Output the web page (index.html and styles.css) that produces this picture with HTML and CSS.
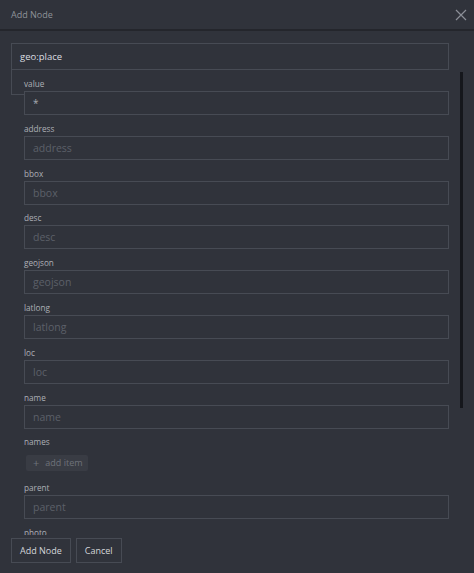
FILE: index.html
```html
<!DOCTYPE html>
<html>
<head>
<meta charset="utf-8">
<link rel="stylesheet" href="styles.css">
</head>
<body>
<div class="dialog">
  <div class="header">
    <span class="title">Add Node</span>
    <svg class="close" width="12" height="12" viewBox="0 0 12 12"><path d="M1 1L11 11M11 1L1 11" stroke="#8b8f97" stroke-width="1.2" fill="none"/></svg>
  </div>
  <div class="type-input">geo:place</div>
  <div class="body">
    <div class="corner"></div>
    <div class="fields">
      <div class="field"><div class="label">value</div><div class="input value">*</div></div>
      <div class="field"><div class="label">address</div><div class="input">address</div></div>
      <div class="field"><div class="label">bbox</div><div class="input">bbox</div></div>
      <div class="field"><div class="label">desc</div><div class="input">desc</div></div>
      <div class="field"><div class="label">geojson</div><div class="input">geojson</div></div>
      <div class="field"><div class="label">latlong</div><div class="input">latlong</div></div>
      <div class="field"><div class="label">loc</div><div class="input">loc</div></div>
      <div class="field"><div class="label">name</div><div class="input">name</div></div>
      <div class="field names"><div class="label">names</div><div class="add-item"><span class="plus">+</span><span>add item</span></div></div>
      <div class="field"><div class="label">parent</div><div class="input">parent</div></div>
      <div class="field"><div class="label">photo</div><div class="input">photo</div></div>
    </div>
    <div class="scrollbar"></div>
  </div>
  <div class="footer">
    <button class="btn">Add Node</button>
    <button class="btn">Cancel</button>
  </div>
</div>
</body>
</html>
```
FILE: styles.css
```css
html, body {
  margin: 0;
  padding: 0;
  background: #30333b;
}
body {
  font-family: "Open Sans", "Noto Sans", sans-serif;
  width: 474px;
  height: 573px;
  overflow: hidden;
}
.dialog {
  width: 474px;
  height: 573px;
  background: #30333b;
  display: flex;
  flex-direction: column;
}
.header {
  height: 29px;
  border-bottom: 2px solid #24262c;
  display: flex;
  align-items: center;
  justify-content: space-between;
  padding: 0 7px 0 11px;
  flex-shrink: 0;
}
.title {
  font-size: 9px;
  color: #8e9299;
  line-height: 12px;
  margin-top: 1px;
}
.close {
  display: block;
  margin-top: 1px;
}
.type-input {
  margin: 12px 25px 0 11px;
  height: 27px;
  box-sizing: border-box;
  border: 1px solid #474b54;
  padding-left: 8px;
  font-size: 9.5px;
  line-height: 25px;
  color: #dcdee1;
  flex-shrink: 0;
}
.body {
  display: flex;
  padding-left: 11px;
  height: 465px;
  flex-shrink: 0;
  overflow: hidden;
}
.corner {
  width: 13px;
  height: 25px;
  box-sizing: border-box;
  border-left: 1px solid #474b54;
  border-bottom: 1px solid #474b54;
  flex-shrink: 0;
}
.fields {
  width: 425px;
  padding-top: 8px;
  flex-shrink: 0;
}
.field {
  margin-bottom: 7.8px;
}
.label {
  font-size: 8.2px;
  line-height: 12px;
  color: #adb0b6;
  margin-bottom: 1px;
}
.input {
  height: 24px;
  box-sizing: border-box;
  border: 1px solid #474b54;
  padding-left: 8px;
  font-size: 10.5px;
  line-height: 22px;
  color: #5c6069;
}
.input.value {
  color: #a8abb1;
  font-size: 10px;
}
.names .label {
  margin-bottom: 6.6px;
}
.names {
  margin-bottom: 11px;
}
.add-item {
  display: flex;
  align-items: center;
  height: 16px;
  width: 62px;
  margin-left: 2px;
  box-sizing: border-box;
  background: #393c44;
  border-radius: 2px;
  padding-left: 7px;
  font-size: 9px;
  line-height: 16px;
  color: #6e727a;
}
.plus {
  font-size: 11px;
  margin-right: 6px;
  line-height: 16px;
}
.scrollbar {
  margin-left: 11px;
  margin-top: 2px;
  width: 3px;
  height: 336px;
  background: #15171c;
  flex-shrink: 0;
}
.footer {
  display: flex;
  gap: 5px;
  padding: 3px 11px 0 11px;
}
.btn {
  height: 25px;
  box-sizing: border-box;
  background: transparent;
  border: 1px solid #474b54;
  border-radius: 0;
  color: #d4d6da;
  font-family: "Open Sans", "Noto Sans", sans-serif;
  font-size: 9px;
  padding: 0 8px;
}
```
